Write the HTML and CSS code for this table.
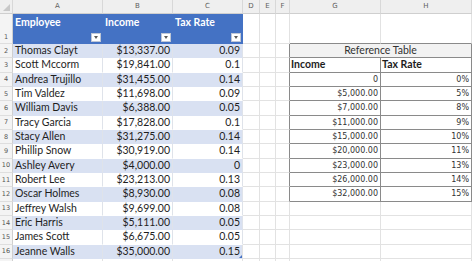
FILE: index.html
```html
<!DOCTYPE html>
<html>
<head>
<meta charset="utf-8">
<link rel="stylesheet" href="styles.css">
</head>
<body>
<div class="sheet">
  <!-- column headers -->
  <div class="ch corner"></div>
  <div class="ch">A</div><div class="ch">B</div><div class="ch">C</div><div class="ch">D</div><div class="ch">E</div><div class="ch">F</div><div class="ch">G</div><div class="ch">H</div>
  <!-- row 1 -->
  <div class="rh rh1">1</div>
  <div class="c th"><span>Employee</span><span class="dd"></span></div>
  <div class="c th"><span>Income</span><span class="dd"></span></div>
  <div class="c th"><span>Tax Rate</span><span class="dd"></span></div>
  <div class="c"></div><div class="c"></div><div class="c"></div><div class="c tb"></div><div class="c tb"></div>
  <!-- row 2 -->
  <div class="rh">2</div>
  <div class="c t band">Thomas Clayt</div><div class="c t band n">$13,337.00</div><div class="c t band n">0.09</div>
  <div class="c"></div><div class="c"></div><div class="c lb"></div>
  <div class="c r rt">Reference Table</div>
  <!-- row 3 -->
  <div class="rh">3</div>
  <div class="c t">Scott Mccorm</div><div class="c t n">$19,841.00</div><div class="c t n">0.1</div>
  <div class="c"></div><div class="c"></div><div class="c lb"></div>
  <div class="c r b">Income</div><div class="c r b">Tax Rate</div>
  <!-- row 4 -->
  <div class="rh">4</div>
  <div class="c t band">Andrea Trujillo</div><div class="c t band n">$31,455.00</div><div class="c t band n">0.14</div>
  <div class="c"></div><div class="c"></div><div class="c lb"></div>
  <div class="c r rn">0</div><div class="c r rn">0%</div>
  <!-- row 5 -->
  <div class="rh">5</div>
  <div class="c t">Tim Valdez</div><div class="c t n">$11,698.00</div><div class="c t n">0.09</div>
  <div class="c"></div><div class="c"></div><div class="c lb"></div>
  <div class="c r rn">$5,000.00</div><div class="c r rn">5%</div>
  <!-- row 6 -->
  <div class="rh">6</div>
  <div class="c t band">William Davis</div><div class="c t band n">$6,388.00</div><div class="c t band n">0.05</div>
  <div class="c"></div><div class="c"></div><div class="c lb"></div>
  <div class="c r rn">$7,000.00</div><div class="c r rn">8%</div>
  <!-- row 7 -->
  <div class="rh">7</div>
  <div class="c t">Tracy Garcia</div><div class="c t n">$17,828.00</div><div class="c t n">0.1</div>
  <div class="c"></div><div class="c"></div><div class="c lb"></div>
  <div class="c r rn">$11,000.00</div><div class="c r rn">9%</div>
  <!-- row 8 -->
  <div class="rh">8</div>
  <div class="c t band">Stacy Allen</div><div class="c t band n">$31,275.00</div><div class="c t band n">0.14</div>
  <div class="c"></div><div class="c"></div><div class="c lb"></div>
  <div class="c r rn">$15,000.00</div><div class="c r rn">10%</div>
  <!-- row 9 -->
  <div class="rh">9</div>
  <div class="c t">Phillip Snow</div><div class="c t n">$30,919.00</div><div class="c t n">0.14</div>
  <div class="c"></div><div class="c"></div><div class="c lb"></div>
  <div class="c r rn">$20,000.00</div><div class="c r rn">11%</div>
  <!-- row 10 -->
  <div class="rh">10</div>
  <div class="c t band">Ashley Avery</div><div class="c t band n">$4,000.00</div><div class="c t band n">0</div>
  <div class="c"></div><div class="c"></div><div class="c lb"></div>
  <div class="c r rn">$23,000.00</div><div class="c r rn">13%</div>
  <!-- row 11 -->
  <div class="rh">11</div>
  <div class="c t">Robert Lee</div><div class="c t n">$23,213.00</div><div class="c t n">0.13</div>
  <div class="c"></div><div class="c"></div><div class="c lb"></div>
  <div class="c r rn">$26,000.00</div><div class="c r rn">14%</div>
  <!-- row 12 -->
  <div class="rh">12</div>
  <div class="c t band">Oscar Holmes</div><div class="c t band n">$8,930.00</div><div class="c t band n">0.08</div>
  <div class="c"></div><div class="c"></div><div class="c lb"></div>
  <div class="c r rn">$32,000.00</div><div class="c r rn">15%</div>
  <!-- row 13 -->
  <div class="rh">13</div>
  <div class="c t">Jeffrey Walsh</div><div class="c t n">$9,699.00</div><div class="c t n">0.08</div>
  <div class="c"></div><div class="c"></div><div class="c"></div><div class="c"></div><div class="c"></div>
  <!-- row 14 -->
  <div class="rh">14</div>
  <div class="c t band">Eric Harris</div><div class="c t band n">$5,111.00</div><div class="c t band n">0.05</div>
  <div class="c"></div><div class="c"></div><div class="c"></div><div class="c"></div><div class="c"></div>
  <!-- row 15 -->
  <div class="rh">15</div>
  <div class="c t">James Scott</div><div class="c t n">$6,675.00</div><div class="c t n">0.05</div>
  <div class="c"></div><div class="c"></div><div class="c"></div><div class="c"></div><div class="c"></div>
  <!-- row 16 -->
  <div class="rh">16</div>
  <div class="c t band">Jeanne Walls</div><div class="c t band n">$35,000.00</div><div class="c t band n last">0.15</div>
  <div class="c"></div><div class="c"></div><div class="c"></div><div class="c"></div><div class="c"></div>
  <!-- row 17 (partly visible) -->
  <div class="rh"></div>
  <div class="c"></div><div class="c"></div><div class="c"></div><div class="c"></div><div class="c"></div><div class="c"></div><div class="c"></div><div class="c"></div>
</div>
</body>
</html>
```

FILE: styles.css
```css
html, body {
  margin: 0;
  padding: 0;
  background: #ffffff;
  overflow: hidden;
}

body {
  width: 474px;
  height: 261px;
  font-family: Lato, "Open Sans", sans-serif;
}

.sheet {
  display: grid;
  grid-template-columns: 13px 90px 70px 70px 17px 16px 14px 91px 91px;
  grid-template-rows: 14px 30px repeat(15, 14.33px) 14px;
}

.ch {
  box-sizing: border-box;
  background: #efefef;
  color: #606060;
  font-family: "DejaVu Sans", sans-serif;
  font-size: 7px;
  text-align: center;
  line-height: 13px;
  border-right: 1px solid #d8d8d8;
  border-bottom: 1px solid #cfcfcf;
}

.corner {
  position: relative;
}

.corner::after {
  content: "";
  position: absolute;
  right: 2px;
  bottom: 2px;
  border-left: 7px solid transparent;
  border-bottom: 7px solid #c8c8c8;
}

.rh {
  box-sizing: border-box;
  background: #f4f4f4;
  color: #555;
  font-family: "DejaVu Sans", sans-serif;
  font-size: 6.5px;
  text-align: center;
  display: flex;
  align-items: center;
  justify-content: center;
  border-right: 1px solid #cfcfcf;
  border-bottom: 1px solid #dedede;
}

.rh1 {
  align-items: flex-end;
  padding-bottom: 2px;
}

.c {
  box-sizing: border-box;
  border-right: 1px solid #e2e2e2;
  border-bottom: 1px solid #e2e2e2;
  font-size: 10.5px;
  color: #1e1e1e;
  white-space: nowrap;
  overflow: hidden;
  line-height: 13px;
  padding: 0 2px;
}

.n {
  text-align: right;
}

.th {
  background: #4472c4;
  color: #ffffff;
  font-weight: bold;
  border-right-color: #4472c4;
  border-bottom-color: #4472c4;
  display: flex;
  flex-direction: column;
  justify-content: space-between;
  padding: 2px 1px 1px 2px;
}

.dd {
  align-self: flex-end;
  box-sizing: border-box;
  width: 10px;
  height: 9px;
  background: #ffffff;
  border: 1px solid #bfc7d6;
  display: flex;
  align-items: center;
  justify-content: center;
}

.dd::after {
  content: "";
  border-left: 2.5px solid transparent;
  border-right: 2.5px solid transparent;
  border-top: 3px solid #5a5a5a;
}

.t {
  border-right-color: #dfe3ea;
  border-bottom-color: transparent;
}

.band {
  background: #d9e1f2;
}

.last {
  position: relative;
  border-right-color: #e2e2e2;
}

.last::after {
  content: "";
  position: absolute;
  right: 0;
  bottom: 0;
  border-left: 3px solid transparent;
  border-bottom: 3px solid #4472c4;
}

.tb {
  border-bottom-color: #8a8a8a;
}

.lb {
  border-right-color: #8a8a8a;
}

.r {
  border-right-color: #8a8a8a;
  border-bottom-color: #8a8a8a;
}

.rt {
  grid-column: span 2;
  background: #f2f2f2;
  text-align: center;
  color: #333;
}

.b {
  font-weight: bold;
  padding-left: 1px;
}

.rn {
  font-family: "DejaVu Sans", sans-serif;
  font-size: 8px;
  text-align: right;
  color: #333;
}
```
